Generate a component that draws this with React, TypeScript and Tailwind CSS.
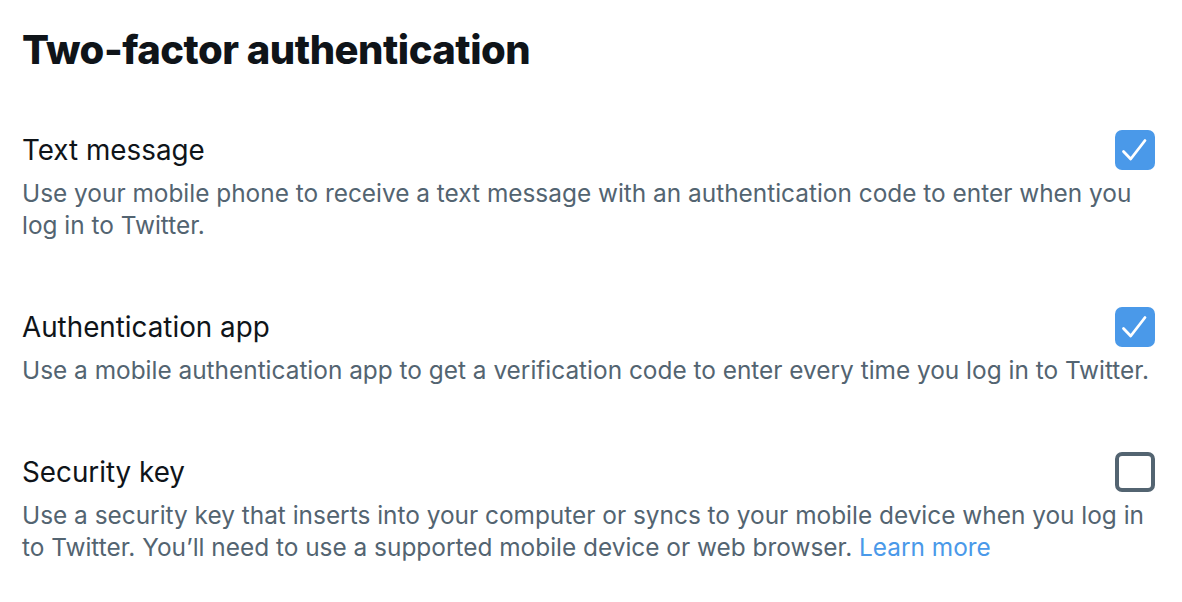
import React from "react";

type Option = {
  title: string;
  description: React.ReactNode;
  checked: boolean;
};

const options: Option[] = [
  {
    title: "Text message",
    description:
      "Use your mobile phone to receive a text message with an authentication code to enter when you log in to Twitter.",
    checked: true,
  },
  {
    title: "Authentication app",
    description:
      "Use a mobile authentication app to get a verification code to enter every time you log in to Twitter.",
    checked: true,
  },
  {
    title: "Security key",
    description: (
      <>
        Use a security key that inserts into your computer or syncs to your mobile device when you log in to
        Twitter. You’ll need to use a supported mobile device or web browser.{" "}
        <a href="#" className="text-[#4a99e9]">
          Learn more
        </a>
      </>
    ),
    checked: false,
  },
];

function Checkbox({ checked }: { checked: boolean }) {
  if (checked) {
    return (
      <div className="w-10 h-10 rounded-[7px] bg-[#4a99e9] shrink-0">
        <svg viewBox="0 0 40 40" className="w-10 h-10" fill="none" stroke="white" strokeWidth="2.8" strokeLinecap="round" strokeLinejoin="round">
          <path d="M8.5 21.5l7.2 7.5L30 10.5" />
        </svg>
      </div>
    );
  }
  return <div className="w-10 h-10 rounded-[7px] border-4 border-[#536471] shrink-0" />;
}

export default function App() {
  return (
    <div className="w-[1182px] h-[602px] bg-white px-[22px] pt-[26px] font-['Inter','Noto_Sans',sans-serif]">
      <h1 className="text-[40px] leading-[48px] font-extrabold text-[#0f1419] tracking-[-0.5px]">
        Two-factor authentication
      </h1>
      <div className="mt-[56px] flex flex-col gap-[66px]">
        {options.map((opt) => (
          <div key={opt.title}>
            <div className="flex items-center justify-between pr-[5px]">
              <p className="text-[27.8px] leading-[40px] text-[#0f1419]">{opt.title}</p>
              <Checkbox checked={opt.checked} />
            </div>
            <p className="mt-[7px] text-[24.4px] leading-[32px] text-[#536471]">{opt.description}</p>
          </div>
        ))}
      </div>
    </div>
  );
}
